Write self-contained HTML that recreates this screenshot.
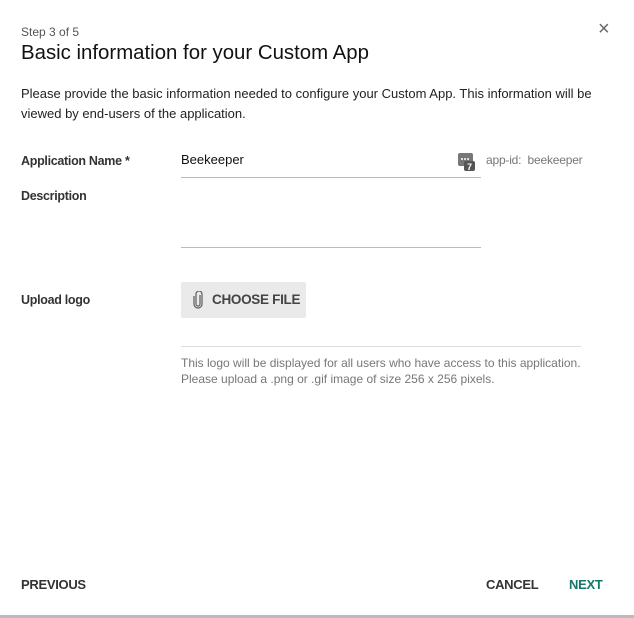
<!DOCTYPE html>
<html><head><style>
body{margin:0;width:634px;height:618px;background:#fff;font-family:"Liberation Sans",Arial,sans-serif;position:relative;overflow:hidden;color:#212121}
.a{position:absolute;white-space:nowrap}
.b{font-size:13px;font-weight:bold;letter-spacing:-0.3px}
</style></head><body>
<div class="a" style="left:21px;top:25px;font-size:12px;color:#555">Step 3 of 5</div>
<div class="a" style="left:21px;top:42px;font-size:20.4px;color:#111">Basic information for your Custom App</div>
<div class="a" style="left:598px;top:18px;font-size:20px;color:#666">×</div>
<div class="a" style="left:21px;top:84px;font-size:13px;line-height:20px;color:#222;white-space:normal;width:600px">Please provide the basic information needed to configure your Custom App. This information will be viewed by end-users of the application.</div>
<div class="a b" style="left:21px;top:154px;font-size:12.5px;color:#333">Application Name *</div>
<div class="a" style="left:181px;top:152px;font-size:13px;color:#111">Beekeeper</div>
<div class="a" style="left:181px;top:177px;width:300px;height:1px;background:#bbb"></div>
<svg class="a" style="left:458px;top:153px" width="18" height="18" viewBox="0 0 18 18"><rect x="0" y="0" width="15" height="13" rx="2" fill="#777"/><rect x="6" y="8" width="11" height="10" rx="2" fill="#555"/><text x="9" y="17" font-size="9" font-weight="bold" fill="#fff" font-family="Liberation Sans">7</text><circle cx="4" cy="6" r="1" fill="#fff"/><circle cx="7" cy="6" r="1" fill="#fff"/><circle cx="10" cy="6" r="1" fill="#fff"/></svg>
<div class="a" style="left:486px;top:153px;font-size:12px;color:#777;letter-spacing:-0.2px">app-id:&nbsp; beekeeper</div>
<div class="a b" style="left:21px;top:189px;font-size:12.5px;color:#333">Description</div>
<div class="a" style="left:181px;top:247px;width:300px;height:1px;background:#bbb"></div>
<div class="a b" style="left:21px;top:293px;font-size:12.5px;color:#333">Upload logo</div>
<div class="a" style="left:181px;top:282px;width:125px;height:36px;background:#eaeaea;border-radius:2px"></div>
<svg class="a" style="left:193px;top:291px" width="10" height="18" viewBox="0 0 10 18"><path d="M7 4v9a2 2 0 0 1-4 0V3a3 3 0 0 1 6 0v10a4 4 0 0 1-8 0V5" fill="none" stroke="#666" stroke-width="1.3"/></svg>
<div class="a b" style="left:212px;top:292px;font-size:13.5px;color:#444">CHOOSE FILE</div>
<div class="a" style="left:181px;top:346px;width:400px;height:1px;background:#ddd"></div>
<div class="a" style="left:181px;top:355px;font-size:12px;line-height:16px;color:#777">This logo will be displayed for all users who have access to this application.<br>Please upload a .png or .gif image of size 256 x 256 pixels.</div>
<div class="a b" style="left:21px;top:577px;color:#333">PREVIOUS</div>
<div class="a b" style="left:486px;top:577px;color:#333">CANCEL</div>
<div class="a b" style="left:569px;top:577px;color:#16776b">NEXT</div>
<div class="a" style="left:0;top:615px;width:634px;height:3px;background:#bbb"></div>
</body></html>
